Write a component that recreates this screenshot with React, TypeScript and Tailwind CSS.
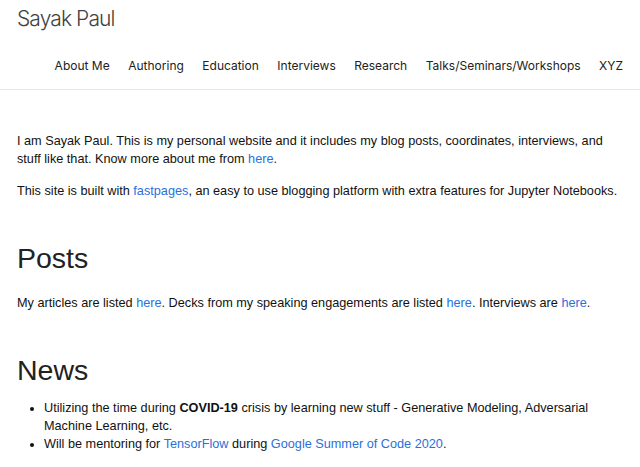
import React from 'react';

const navItems = ['About Me', 'Authoring', 'Education', 'Interviews', 'Research', 'Talks/Seminars/Workshops', 'XYZ'];

const A: React.FC<{ children: React.ReactNode }> = ({ children }) => (
  <a href="#" className="text-[#2a6fdb] no-underline">{children}</a>
);

export default function App() {
  return (
    <div className="min-h-screen bg-white text-[#111] font-['Liberation_Sans',Arial,sans-serif]">
      {/* Header */}
      <header className="border-b border-[#e8e8e8] h-[90px] px-[17px]">
        <div className="pt-[5px] h-[52px]">
          <a href="#" className="text-[21px] font-light tracking-[-0.9px] text-[#424242] font-['Inter',sans-serif] leading-[28px]">
            Sayak Paul
          </a>
        </div>
        <nav className="flex justify-end gap-[18.5px] text-[12px] text-[#222] font-['Inter',sans-serif] leading-[28px] whitespace-nowrap">
          {navItems.map((n) => (
            <a key={n} href="#">{n}</a>
          ))}
        </nav>
      </header>

      {/* Content */}
      <main className="px-[17px] pt-[42px] text-[12.7px] leading-[18px]">
        <p className="mb-[14px]">
          I am Sayak Paul. This is my personal website and it includes my blog posts, coordinates, interviews, and stuff like that. Know more about me from <A>here</A>.
        </p>
        <p>
          This site is built with <A>fastpages</A>, an easy to use blogging platform with extra features for Jupyter Notebooks.
        </p>

        <h2 className="text-[28.5px] font-light text-[#222] leading-[36px] mt-[40px] mb-[18px]">Posts</h2>
        <p>
          My articles are listed <A>here</A>. Decks from my speaking engagements are listed <A>here</A>. Interviews are <A>here</A>.
        </p>

        <h2 className="text-[28.5px] font-light text-[#222] leading-[36px] mt-[40px] mb-[11px]">News</h2>
        <ul className="list-disc pl-[27px]">
          <li>
            Utilizing the time during <b>COVID-19</b> crisis by learning new stuff - Generative Modeling, Adversarial Machine Learning, etc.
          </li>
          <li>
            Will be mentoring for <A>TensorFlow</A> during <A>Google Summer of Code 2020</A>.
          </li>
        </ul>
      </main>
    </div>
  );
}
